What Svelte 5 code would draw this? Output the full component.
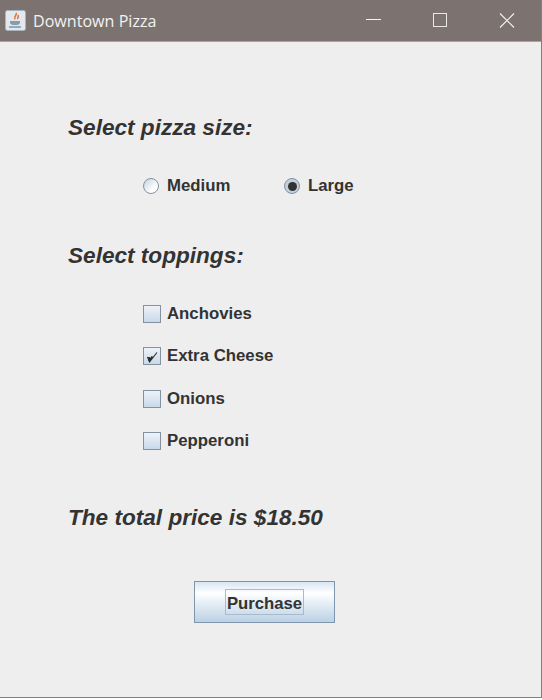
<script>
    let size = $state("Large");
    let toppings = $state([
        { name: "Anchovies", on: false },
        { name: "Extra Cheese", on: true },
        { name: "Onions", on: false },
        { name: "Pepperoni", on: false }
    ]);

    const base = 15.5;
    let total = $derived(base + (size === "Large" ? 2 : 0) + toppings.filter((t) => t.on).length);
</script>

<div class="window">
    <!-- title bar -->
    <div class="titlebar">
        <div class="appicon">
            <svg width="21" height="21" viewBox="0 0 21 21">
                <rect x="0.5" y="0.5" width="20" height="20" rx="2" fill="#e3e8ee" stroke="#a9b3be" />
                <path d="M11 3c2 2-3 3-1 6.500M13 5c1 2-1 2.500 0 4" fill="none" stroke="#e0702a" stroke-width="1.500" />
                <path d="M5 11h10v1.500c0 1.500-1.500 2.500-3 2.500H8c-1.500 0-3-1-3-2.500z" fill="#8a9cab" />
                <path d="M4 17h12" stroke="#6f8799" stroke-width="1.300" />
            </svg>
        </div>
        <span class="title">Downtown Pizza</span>
        <div class="controls">
            <svg class="ctrl" width="46" height="41" viewBox="0 0 46 41">
                <path d="M16 19.500h15" stroke="#f4f4f4" stroke-width="1" />
            </svg>
            <svg class="ctrl" width="46" height="41" viewBox="0 0 46 41">
                <rect x="16.500" y="13.500" width="13" height="13" fill="none" stroke="#e8e8e8" stroke-width="1" />
            </svg>
            <svg class="ctrl" width="46" height="41" viewBox="0 0 46 41">
                <path d="M16 13.500l14 14M30 13.500l-14 14" stroke="#f0f0f0" stroke-width="1.200" />
            </svg>
        </div>
    </div>

    <div class="content">
        <h2>Select pizza size:</h2>
        <div class="sizes">
            {#each ["Medium", "Large"] as s}
                <button class="opt size" onclick={() => (size = s)}>
                    <span class="radio" class:sel={size === s}></span>
                    {s}
                </button>
            {/each}
        </div>

        <h2 class="second">Select toppings:</h2>
        <div class="toppings">
            {#each toppings as t}
                <button class="opt" onclick={() => (t.on = !t.on)}>
                    <span class="check">
                        {#if t.on}
                            <svg width="16" height="16" viewBox="0 0 16 16">
                                <path d="M3.500 9l2 5L13 4.500" fill="none" stroke="#2a2a2a" stroke-width="1.100" />
                                <path d="M3.800 9h2l1 2.500L6 13.500z" fill="#2a2a2a" />
                                <path d="M5 13l3.500-4.500" fill="none" stroke="#2a2a2a" stroke-width="2" />
                            </svg>
                        {/if}
                    </span>
                    {t.name}
                </button>
            {/each}
        </div>

        <h2 class="price">The total price is ${total.toFixed(2)}</h2>

        <div class="buy">
            <button class="purchase"><span>Purchase</span></button>
        </div>
    </div>
</div>

<style>
    :global(body) {
        margin: 0;
        background: #fff;
    }

    .window {
        width: 542px;
        height: 698px;
        box-sizing: border-box;
        background: #eeeeee;
        border-right: 1px solid #808080;
        border-bottom: 1px solid #808080;
        font-family: "Liberation Sans", Arial, sans-serif;
        overflow: hidden;
    }

    .titlebar {
        height: 42px;
        background: #7c7370;
        border-bottom: 1px solid #a8a4a2;
        box-sizing: border-box;
        display: flex;
        align-items: center;
        padding-left: 5px;
        color: #f2f2f2;
    }

    .appicon {
        height: 21px;
    }

    .title {
        font-family: "Open Sans", "Noto Sans", sans-serif;
        font-size: 16.100px;
        margin-left: 7px;
    }

    .controls {
        margin-left: auto;
        display: flex;
        gap: 21px;
        padding-right: 11px;
    }

    .content {
        padding: 72px 0 0 68px;
        color: #333333;
    }

    h2 {
        margin: 0;
        font-size: 22.600px;
        line-height: 28px;
        font-style: italic;
        font-weight: bold;
    }

    .second {
        margin-top: 45px;
    }

    .price {
        margin-top: 52px;
    }

    .opt {
        display: flex;
        align-items: center;
        gap: 6px;
        border: 0;
        padding: 0;
        background: none;
        font-family: inherit;
        font-size: 16.800px;
        font-weight: bold;
        color: #333333;
        height: 22px;
    }

    .sizes {
        display: flex;
        margin: 33px 0 0 75px;
    }

    .size {
        width: 141px;
        gap: 8px;
    }

    .radio {
        width: 14px;
        height: 14px;
        border-radius: 50%;
        border: 1px solid #84929f;
        background: linear-gradient(135deg, #c3d3e3, #ffffff 70%);
        display: flex;
        align-items: center;
        justify-content: center;
    }

    .radio.sel {
        background: #c3d0dc;
    }

    .radio.sel::after {
        content: "";
        width: 9px;
        height: 9px;
        border-radius: 50%;
        background: #333333;
    }

    .toppings {
        display: flex;
        flex-direction: column;
        gap: 20.400px;
        margin: 33px 0 0 75px;
    }

    .check {
        width: 18px;
        height: 18px;
        box-sizing: border-box;
        border: 1px solid #84929f;
        background: linear-gradient(#edf2f8, #c9d9e9);
        display: block;
    }

    .check svg {
        display: block;
    }

    .buy {
        margin: 49px 0 0 126px;
    }

    .purchase {
        width: 141px;
        height: 42px;
        border: 1px solid #7f95ab;
        background: linear-gradient(#d8e5f1, #ffffff 28%, #e4edf5 55%, #bcd1e5);
        padding: 0;
        display: flex;
        align-items: center;
        justify-content: center;
        font-family: inherit;
        font-size: 16.700px;
        font-weight: bold;
        color: #333333;
    }

    .purchase span {
        border: 1px solid #a8bace;
        padding: 2px 1px 0;
        line-height: 24px;
        height: 26px;
        box-sizing: border-box;
    }
</style>
